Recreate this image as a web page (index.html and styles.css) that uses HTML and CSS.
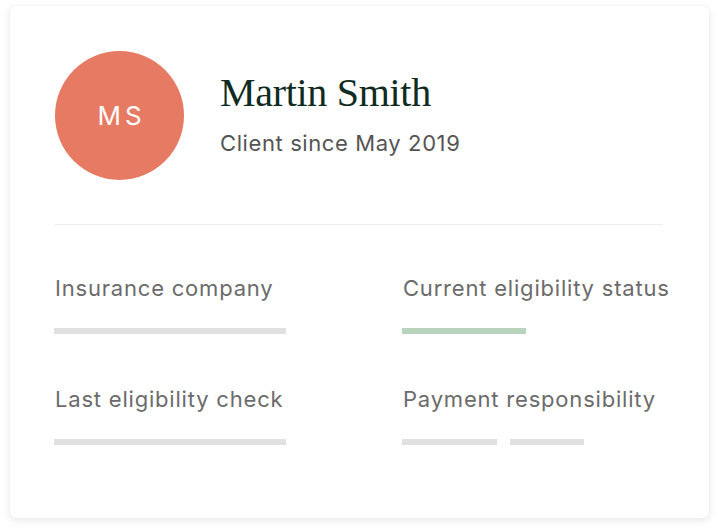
FILE: index.html
```html
<!DOCTYPE html>
<html lang="en">
<head>
<meta charset="utf-8">
<title>Client card</title>
<link rel="stylesheet" href="styles.css">
</head>
<body>
<div class="card">
  <div class="header">
    <div class="avatar">MS</div>
    <div class="info">
      <h1 class="name">Martin Smith</h1>
      <p class="since">Client since May 2019</p>
    </div>
  </div>
  <hr class="divider">
  <div class="fields">
    <div class="field">
      <div class="label">Insurance company</div>
      <div class="bars"><span class="bar bar-wide"></span></div>
    </div>
    <div class="field">
      <div class="label">Current eligibility status</div>
      <div class="bars"><span class="bar bar-green"></span></div>
    </div>
    <div class="field">
      <div class="label">Last eligibility check</div>
      <div class="bars"><span class="bar bar-wide"></span></div>
    </div>
    <div class="field">
      <div class="label">Payment responsibility</div>
      <div class="bars"><span class="bar bar-a"></span><span class="bar bar-b"></span></div>
    </div>
  </div>
</div>
</body>
</html>
```
FILE: styles.css
```css
html, body {
  margin: 0;
  padding: 0;
  background: #ffffff;
}
body {
  width: 718px;
  height: 530px;
  overflow: hidden;
  font-family: "Inter", "Liberation Sans", sans-serif;
}
.card {
  box-sizing: border-box;
  margin: 6px 9px 0 10px;
  width: 699px;
  height: 512px;
  background: #ffffff;
  border-radius: 6px;
  box-shadow: 0 2px 8px rgba(0, 0, 0, 0.10), 0 0 2px rgba(0, 0, 0, 0.05);
  padding: 45px 46px 0 45px;
}
.header {
  display: flex;
  align-items: flex-start;
  gap: 36px;
}
.avatar {
  width: 129px;
  height: 129px;
  border-radius: 50%;
  background: #e67a63;
  color: #ffffff;
  display: flex;
  align-items: center;
  justify-content: center;
  font-size: 26px;
  letter-spacing: 4px;
  text-indent: 4px;
  font-weight: 400;
}
.info {
  padding-top: 20px;
}
.name {
  margin: 0;
  font-family: "Liberation Serif", "DejaVu Serif", serif;
  font-weight: 400;
  font-size: 40px;
  line-height: 44px;
  color: #0f2b22;
  letter-spacing: -0.3px;
}
.since {
  margin: 15px 0 0;
  font-size: 22px;
  line-height: 26px;
  color: #555555;
  letter-spacing: 0.6px;
}
.divider {
  border: 0;
  border-top: 1px solid #eeeeee;
  margin: 44px 0 0;
}
.fields {
  display: grid;
  grid-template-columns: 348px 1fr;
  row-gap: 52px;
  padding-top: 50px;
}
.label {
  font-size: 22px;
  line-height: 26px;
  color: #6b6b6b;
  letter-spacing: 0.8px;
  white-space: nowrap;
}
.bars {
  display: flex;
  gap: 13px;
  margin-top: 27px;
  margin-left: -1px;
}
.bar {
  display: block;
  height: 6px;
  background: #e0e0e0;
}
.bar-wide { width: 232px; }
.bar-green { width: 124px; background: #b9d4bd; }
.bar-a { width: 95px; }
.bar-b { width: 74px; }
```
